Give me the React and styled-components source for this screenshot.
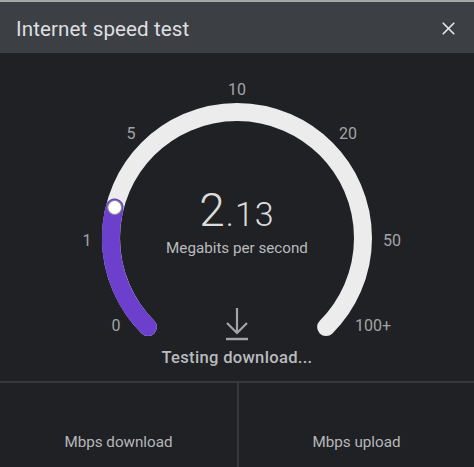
import styled, { createGlobalStyle } from "styled-components";
import { X } from "lucide-react";

const GlobalStyle = createGlobalStyle`
    html, body {
        margin: 0;
        padding: 0;
        background: #202124;
    }
    body {
        font-family: Roboto, "Noto Sans", sans-serif;
    }
`

const ticks = [
    { label: "10", x: 170, y: 14 },
    { label: "5", x: 64, y: 58 },
    { label: "20", x: 281, y: 58 },
    { label: "1", x: 20, y: 165 },
    { label: "50", x: 325, y: 165 },
    { label: "0", x: 49, y: 250 },
    { label: "100+", x: 306, y: 250 },
];

const Gauge = () => {
    return (
        <svg width="340" height="280" viewBox="0 0 340 280">
            <path
                d="M 80.9 252.1 A 126 126 0 1 1 259.1 252.1"
                fill="none"
                stroke="#ececec"
                strokeWidth="18"
                strokeLinecap="round"
            />
            <path
                d="M 80.9 252.1 A 126 126 0 0 1 47.7 132.5"
                fill="none"
                stroke="#6c3fcc"
                strokeWidth="18"
                strokeLinecap="round"
            />
            <circle cx="47.7" cy="132.5" r="7" fill="#ffffff" stroke="#8a8a8a" strokeWidth="1.2" />
            {ticks.map((t) => (
                <text
                    key={t.label}
                    x={t.x}
                    y={t.y}
                    textAnchor="middle"
                    dominantBaseline="central"
                    fontFamily="Roboto, sans-serif"
                    fontSize="16"
                    fill="#a2a4a7"
                >
                    {t.label}
                </text>
            ))}
        </svg>
    );
}

const DownloadIcon = () => (
    <svg width="26" height="34" viewBox="0 0 26 34">
        <path d="M13 1 V26 M3 16 L13 26 L23 16" fill="none" stroke="#a2a4a7" strokeWidth="2.2" />
        <path d="M2 32 H24" stroke="#a2a4a7" strokeWidth="2.4" />
    </svg>
);

const App = () => {
    return (
        <>
        <GlobalStyle />
        <Panel>
            <TopStrip />
            <Header>
                <Title>Internet speed test</Title>
                <CloseButton>
                    <X size={21} strokeWidth={2} color="#e2e3e5" />
                </CloseButton>
            </Header>
            <GaugeArea>
                <GaugeWrap>
                    <Gauge />
                    <Readout>
                        <Value>2<Decimal>.13</Decimal></Value>
                        <Unit>Megabits per second</Unit>
                        <IconRow>
                            <DownloadIcon />
                        </IconRow>
                        <Status>Testing download...</Status>
                    </Readout>
                </GaugeWrap>
            </GaugeArea>
            <Results>
                <ResultCell>
                    <ResultLabel>Mbps download</ResultLabel>
                </ResultCell>
                <ResultCell $divider>
                    <ResultLabel>Mbps upload</ResultLabel>
                </ResultCell>
            </Results>
        </Panel>
        </>
    );
}

export default App;

const Panel = styled.div`
    width: 474px;
    height: 467px;
    display: flex;
    flex-direction: column;
    background: #202124;
    overflow: hidden;
`

const TopStrip = styled.div`
    height: 2px;
    background: #a4a6a8;
`

const Header = styled.div`
    height: 51px;
    display: flex;
    align-items: center;
    justify-content: space-between;
    padding: 2px 16px 0 16px;
    box-sizing: border-box;
    background: #3c3f43;
`

const Title = styled.div`
    font-size: 20.6px;
    color: #dedfe1;
    letter-spacing: 0.1px;
`

const CloseButton = styled.div`
    display: flex;
    align-items: center;
    margin-right: -1px;
`

const GaugeArea = styled.div`
    height: 328px;
    display: flex;
    justify-content: center;
    padding-top: 22px;
    box-sizing: border-box;
`

const GaugeWrap = styled.div`
    position: relative;
    width: 340px;
    height: 280px;
`

const Readout = styled.div`
    position: absolute;
    top: 112px;
    left: 0;
    right: 0;
    display: flex;
    flex-direction: column;
    align-items: center;
`

const Value = styled.div`
    font-size: 46px;
    line-height: 46px;
    font-weight: 300;
    color: #dcdcdc;
    letter-spacing: 1px;
`

const Decimal = styled.span`
    font-size: 34px;
`

const Unit = styled.div`
    margin-top: 1px;
    font-size: 15.2px;
    line-height: 20px;
    color: #b9bbbe;
`

const IconRow = styled.div`
    margin-top: 49px;
    height: 34px;
    display: flex;
`

const Status = styled.div`
    margin-top: 6px;
    font-size: 16.6px;
    line-height: 22px;
    font-weight: 500;
    color: #b9bbbe;
    letter-spacing: 0.3px;
`

const Results = styled.div`
    flex: 1;
    display: grid;
    grid-template-columns: 237px 1fr;
    border-top: 2px solid #37393c;
`

const ResultCell = styled.div`
    display: flex;
    align-items: flex-end;
    justify-content: center;
    padding-bottom: 14px;
    border-left: ${(p) => (p.$divider ? "2px solid #37393c" : "none")};
`

const ResultLabel = styled.div`
    font-size: 15.2px;
    line-height: 22px;
    color: #b6b8bb;
`
